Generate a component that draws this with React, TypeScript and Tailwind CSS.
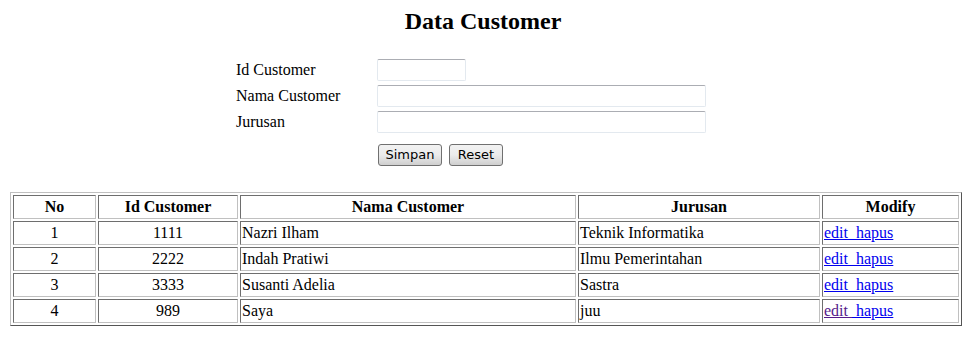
import React from "react";

const rows = [
  { no: "1", id: "1111", nama: "Nazri Ilham", jurusan: "Teknik Informatika", visited: false },
  { no: "2", id: "2222", nama: "Indah Pratiwi", jurusan: "Ilmu Pemerintahan", visited: false },
  { no: "3", id: "3333", nama: "Susanti Adelia", jurusan: "Sastra", visited: false },
  { no: "4", id: "989", nama: "Saya", jurusan: "juu", visited: true },
];

const th =
  "border border-t-[#6e6e6e] border-l-[#6e6e6e] border-b-[#c0c0c0] border-r-[#c0c0c0] px-[1px] py-[1px] h-[24px] leading-[20px] font-bold text-center";
const td =
  "border border-t-[#6e6e6e] border-l-[#6e6e6e] border-b-[#c0c0c0] border-r-[#c0c0c0] px-[1px] py-[1px] h-[24px] leading-[20px]";

const inputCls =
  "h-[22px] border border-[#e3e9ef] border-t-[#abadb3] rounded-[2px] bg-white outline-none";

const btnCls =
  "h-[22px] border border-[#707070] rounded-[3px] bg-gradient-to-b from-[#f2f2f2] via-[#ebebeb] to-[#cfcfcf] text-[13px] leading-[18px] text-black";

export default function App() {
  return (
    <div
      className="w-[966px] h-[357px] bg-white text-black text-[16px]"
      style={{ fontFamily: '"Liberation Serif", "Times New Roman", serif' }}
    >
      <div className="pt-[7px]">
        <h2 className="text-center text-[24px] leading-[28px] font-bold">Data Customer</h2>
      </div>

      <div className="mt-[22px] ml-[236px] flex flex-col">
        <div className="flex items-center h-[26px]">
          <div className="w-[141px]">Id Customer</div>
          <input className={`${inputCls} w-[89px]`} />
        </div>
        <div className="flex items-center h-[26px]">
          <div className="w-[141px]">Nama Customer</div>
          <input className={`${inputCls} w-[329px]`} />
        </div>
        <div className="flex items-center h-[26px]">
          <div className="w-[141px]">Jurusan</div>
          <input className={`${inputCls} w-[329px]`} />
        </div>
        <div
          className="flex gap-[7px] pl-[142px] pt-[9px]"
          style={{ fontFamily: '"DejaVu Sans", "Liberation Sans", sans-serif' }}
        >
          <button className={`${btnCls} w-[64px] text-[12px]`}>Simpan</button>
          <button className={`${btnCls} w-[54px] text-[12px]`}>Reset</button>
        </div>
      </div>

      <table className="mt-[26px] ml-[10px] w-[952px] table-fixed border-separate border-spacing-[2px] border border-t-[#c0c0c0] border-l-[#c0c0c0] border-b-[#555555] border-r-[#555555]">
        <thead>
          <tr>
            <th className={`${th} w-[83px]`}>No</th>
            <th className={`${th} w-[140px]`}>Id Customer</th>
            <th className={`${th} w-[336px]`}>Nama Customer</th>
            <th className={`${th} w-[242px]`}>Jurusan</th>
            <th className={`${th} w-[137px]`}>Modify</th>
          </tr>
        </thead>
        <tbody>
          {rows.map((r) => (
            <tr key={r.no}>
              <td className={`${td} text-center`}>{r.no}</td>
              <td className={`${td} text-center`}>{r.id}</td>
              <td className={td}>{r.nama}</td>
              <td className={td}>{r.jurusan}</td>
              <td className={td}>
                <a
                  href="#"
                  className={`underline ${r.visited ? "text-[#551a8b]" : "text-[#0000ee]"}`}
                >
                  edit{"\u00a0"}
                </a>
                <a href="#" className="underline text-[#0000ee]">
                  {"\u00a0"}hapus
                </a>
              </td>
            </tr>
          ))}
        </tbody>
      </table>
    </div>
  );
}
